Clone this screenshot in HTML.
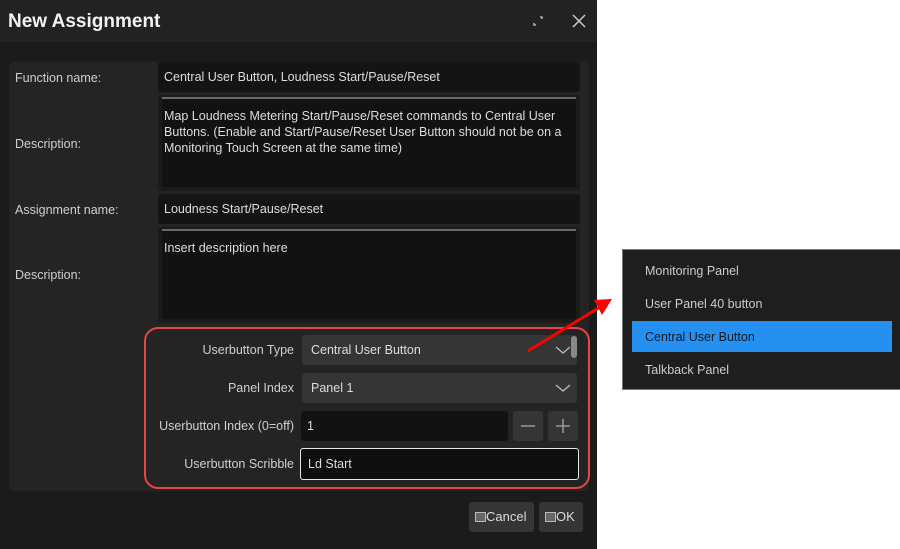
<!DOCTYPE html>
<html><head><style>
*{margin:0;padding:0;box-sizing:border-box}
body{width:900px;height:549px;background:#fff;position:relative;overflow:hidden;font-family:"Liberation Sans",sans-serif;font-size:12.5px;color:#d0d0d0}
.a{position:absolute}
.lbl{position:absolute;color:#cfcfcf;font-size:12.5px}
.fld{position:absolute;background:#141414;border-radius:3px;color:#ddd;padding-left:6px;line-height:31px}
.ta{position:absolute;background:#1b1b1b;border-radius:3px}
.ta div{position:absolute;left:4px;right:4px;top:2px;bottom:4px;background:#121212;border-top:2px solid #6a6a6a;padding:9px 2px;line-height:16px;color:#ddd}
.sel{position:absolute;background:#353535;border-radius:3px;color:#ddd;padding-left:9px;line-height:30px}
.rl{position:absolute;text-align:right;color:#cfcfcf}
.btn{position:absolute;background:#353535;border-radius:3px;color:#ddd;line-height:30px;font-size:13px}
</style></head><body>
<div class="a" style="left:0;top:0;width:597px;height:549px;background:#1b1b1b"></div>
<div class="a" style="left:0;top:0;width:597px;height:42px;background:#222"></div>
<div class="a" style="left:8px;top:11px;font-size:19px;font-weight:bold;color:#f2f2f2">New Assignment</div>
<div class="a" style="left:533px;top:15px;width:10px;height:10px"><svg width="10" height="10"><path d="M7 1h2v2M1 7v2h2" stroke="#ccc" fill="none" stroke-width="1.3"/></svg></div>
<div class="a" style="left:572px;top:14px"><svg width="14" height="14"><path d="M1 1L13 13M13 1L1 13" stroke="#ccc" stroke-width="1.5"/></svg></div>
<div class="a" style="left:9px;top:62px;width:580px;height:429px;background:#242424;border-radius:5px"></div>

<div class="lbl" style="left:15px;top:71px">Function name:</div>
<div class="fld" style="left:158px;top:62px;width:422px;height:30px">Central User Button, Loudness Start/Pause/Reset</div>
<div class="lbl" style="left:15px;top:137px">Description:</div>
<div class="ta" style="left:158px;top:95px;width:422px;height:96px"><div>Map Loudness Metering Start/Pause/Reset commands to Central User Buttons. (Enable and Start/Pause/Reset User Button should not be on a Monitoring Touch Screen at the same time)</div></div>
<div class="lbl" style="left:15px;top:203px">Assignment name:</div>
<div class="fld" style="left:158px;top:194px;width:422px;height:30px">Loudness Start/Pause/Reset</div>
<div class="lbl" style="left:15px;top:268px">Description:</div>
<div class="ta" style="left:158px;top:227px;width:422px;height:96px"><div>Insert description here</div></div>

<div class="a" style="left:144px;top:327px;width:446px;height:162px;border:2.5px solid #e84545;border-radius:14px"></div>
<div class="rl" style="left:140px;width:154px;top:343px">Userbutton Type</div>
<div class="sel" style="left:302px;top:335px;width:275px;height:30px">Central User Button</div>
<div class="a" style="left:571px;top:336px;width:6px;height:22px;background:#888;border-radius:3px"></div>
<div class="rl" style="left:140px;width:154px;top:381px">Panel Index</div>
<div class="sel" style="left:302px;top:373px;width:275px;height:30px">Panel 1</div>
<svg class="a" style="left:530px;top:341px" width="40" height="60"><path d="M26 6l7 6 7-6" stroke="#bbb" fill="none" stroke-width="1.3"/><path d="M26 44l7 6 7-6" stroke="#bbb" fill="none" stroke-width="1.3"/></svg>
<div class="rl" style="left:140px;width:154px;top:419px">Userbutton Index (0=off)</div>
<div class="fld" style="left:301px;top:411px;width:207px;height:30px;background:#121212">1</div>
<div class="btn" style="left:513px;top:411px;width:30px;height:30px"><svg width="30" height="30"><path d="M8 15h14" stroke="#aaa" stroke-width="1.3"/></svg></div>
<div class="btn" style="left:548px;top:411px;width:30px;height:30px"><svg width="30" height="30"><path d="M8 15h14M15 8v14" stroke="#aaa" stroke-width="1.3"/></svg></div>
<div class="rl" style="left:140px;width:154px;top:457px">Userbutton Scribble</div>
<div class="fld" style="left:300px;top:448px;width:279px;height:32px;background:#0e0e0e;border:1.5px solid #e6e6e6;line-height:31px;padding-left:7px">Ld Start</div>

<div class="btn" style="left:469px;top:502px;width:65px;height:30px;padding-left:6px"><span style="display:inline-block;width:11px;height:10px;border:1.5px solid #bbb;background:#666;vertical-align:-1px"></span>Cancel</div>
<div class="btn" style="left:539px;top:502px;width:44px;height:30px;padding-left:6px"><span style="display:inline-block;width:11px;height:10px;border:1.5px solid #bbb;background:#666;vertical-align:-1px"></span>OK</div>

<div class="a" style="left:622px;top:249px;width:278px;height:141px;background:#1e1e1e;border:1px solid #777;border-right:none"></div>
<div class="a" style="left:645px;top:264px;color:#ccc">Monitoring Panel</div>
<div class="a" style="left:645px;top:297px;color:#ccc">User Panel 40 button</div>
<div class="a" style="left:632px;top:321px;width:260px;height:31px;background:#2590f0"></div>
<div class="a" style="left:645px;top:330px;color:#0e1a28">Central User Button</div>
<div class="a" style="left:645px;top:363px;color:#ccc">Talkback Panel</div>
<svg class="a" style="left:520px;top:290px" width="100" height="70"><path d="M8 61L80 17" stroke="#f00" stroke-width="3"/><path d="M92 9L74 10 82 25z" fill="#f00"/></svg>
</body></html>
